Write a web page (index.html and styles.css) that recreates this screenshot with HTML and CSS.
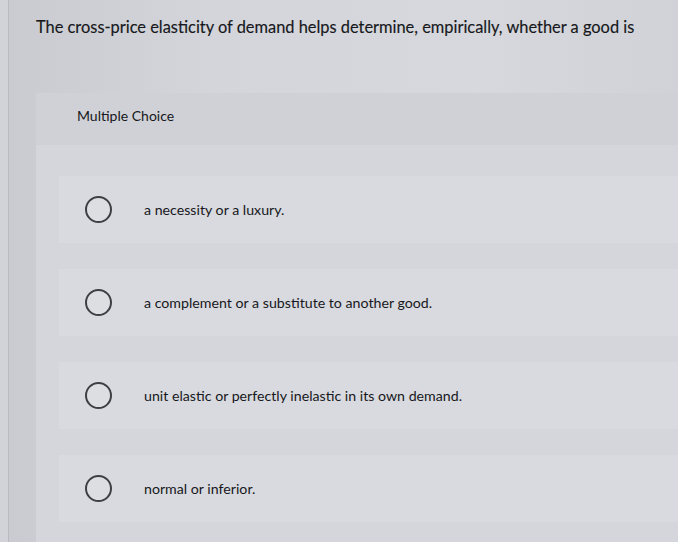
FILE: index.html
```html
<!DOCTYPE html>
<html>
<head>
<meta charset="utf-8">
<link rel="stylesheet" href="styles.css">
</head>
<body>
<div class="page">
  <p class="question">The cross-price elasticity of demand helps determine, empirically, whether a good is</p>
  <div class="panel">
    <div class="panel-head">Multiple Choice</div>
    <div class="options">
      <div class="option"><span class="radio"></span><span class="label">a necessity or a luxury.</span></div>
      <div class="option"><span class="radio"></span><span class="label">a complement or a substitute to another good.</span></div>
      <div class="option"><span class="radio"></span><span class="label">unit elastic or perfectly inelastic in its own demand.</span></div>
      <div class="option"><span class="radio"></span><span class="label">normal or inferior.</span></div>
    </div>
  </div>
</div>
</body>
</html>
```
FILE: styles.css
```css
html, body {
  margin: 0;
  padding: 0;
  background: #d1d3d8;
}
body {
  font-family: Lato, "Liberation Sans", sans-serif;
  color: #1f2023;
  width: 678px;
  height: 542px;
  overflow: hidden;
}
.page {
  height: 542px;
  background: linear-gradient(90deg, #c9cbd0 0%, #d3d5da 30%, #d6d8dd 70%, #d0d2d7 100%);
  border-left: 1px solid #b9bbc0;
  margin-left: 8px;
}
.question {
  margin: 0;
  padding: 17px 0 0 27px;
  font-size: 16.4px;
  line-height: 20px;
  color: #17181b;
  -webkit-text-stroke: 0.15px #17181b;
}
.panel {
  margin: 56px 0 0 27px;
  background: #d4d6db;
  padding-bottom: 30px;
}
.panel-head {
  height: 52px;
  box-sizing: border-box;
  padding: 14px 0 0 41px;
  font-size: 14px;
  line-height: 17px;
  background: #cfd1d6;
  color: #17181b;
}
.options {
  display: flex;
  flex-direction: column;
  gap: 26px;
  padding-top: 31px;
  padding-left: 23px;
}
.option {
  height: 67px;
  display: flex;
  align-items: center;
  padding-left: 26px;
  background: #d8dadf;
}
.radio {
  width: 23px;
  height: 23px;
  border: 2px solid #3e3f43;
  border-radius: 50%;
  flex: none;
  background: #dcdee2;
}
.label {
  margin-left: 32px;
  font-size: 14.2px;
  color: #17181b;
}
```
